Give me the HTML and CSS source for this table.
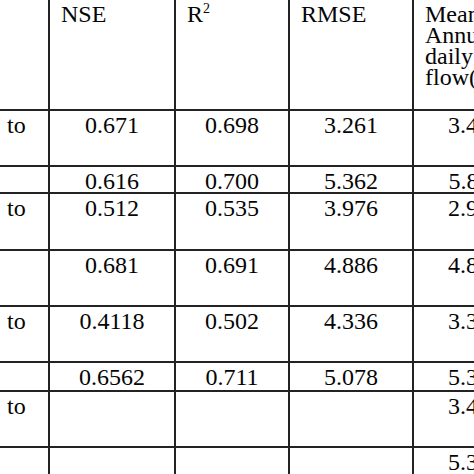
FILE: index.html
```html
<!DOCTYPE html>
<html>
<head>
<meta charset="utf-8">
<link rel="stylesheet" href="styles.css">
</head>
<body>
<div class="sheet">
  <div class="grid">
    <div class="cell head"></div>
    <div class="cell head">NSE</div>
    <div class="cell head">R<sup class="sup">2</sup></div>
    <div class="cell head">RMSE</div>
    <div class="cell head">Mean<br>Annual<br>daily<br>flow(m<sup class="sup">3</sup>/s)</div>

    <div class="cell lab">to</div>
    <div class="cell num">0.671</div>
    <div class="cell num">0.698</div>
    <div class="cell num">3.261</div>
    <div class="cell num">3.452</div>

    <div class="cell lab"></div>
    <div class="cell num">0.616</div>
    <div class="cell num">0.700</div>
    <div class="cell num">5.362</div>
    <div class="cell num">5.811</div>

    <div class="cell lab">to</div>
    <div class="cell num">0.512</div>
    <div class="cell num">0.535</div>
    <div class="cell num">3.976</div>
    <div class="cell num">2.964</div>

    <div class="cell lab"></div>
    <div class="cell num">0.681</div>
    <div class="cell num">0.691</div>
    <div class="cell num">4.886</div>
    <div class="cell num">4.823</div>

    <div class="cell lab">to</div>
    <div class="cell num">0.4118</div>
    <div class="cell num">0.502</div>
    <div class="cell num">4.336</div>
    <div class="cell num">3.315</div>

    <div class="cell lab"></div>
    <div class="cell num">0.6562</div>
    <div class="cell num">0.711</div>
    <div class="cell num">5.078</div>
    <div class="cell num">5.347</div>

    <div class="cell lab">to</div>
    <div class="cell num"></div>
    <div class="cell num"></div>
    <div class="cell num"></div>
    <div class="cell num">3.428</div>

    <div class="cell lab"></div>
    <div class="cell num"></div>
    <div class="cell num"></div>
    <div class="cell num"></div>
    <div class="cell num">5.362</div>
  </div>
</div>
</body>
</html>
```
FILE: styles.css
```css
html, body {
  margin: 0;
  padding: 0;
  background: #ffffff;
  overflow: hidden;
}
.sheet {
  width: 474px;
  height: 474px;
  overflow: hidden;
}
.grid {
  display: grid;
  grid-template-columns: 48px 124px 112px 122px 122px;
  grid-template-rows: 109px 54px 25px 55px 54px 54px 27px 54px 60px;
  gap: 2px;
  background: #232323;
  width: 536px;
  font-family: "Liberation Serif", "Times New Roman", serif;
  font-size: 24px;
  line-height: 21px;
  color: #050505;
}
.cell {
  background: #ffffff;
  padding-top: 4px;
}
.head {
  padding-left: 11px;
}
.lab {
  padding-left: 7px;
}
.num {
  text-align: center;
}
.sup {
  font-size: 14px;
  line-height: 0;
  vertical-align: 9px;
}
```
